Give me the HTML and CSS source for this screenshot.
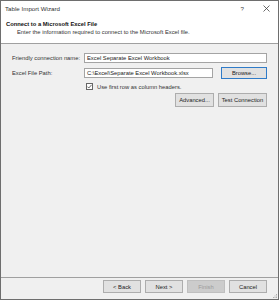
FILE: index.html
```html
<!DOCTYPE html>
<html>
<head>
<meta charset="utf-8">
<link rel="stylesheet" href="styles.css">
</head>
<body>
<div class="window">
  <div class="titlebar">
    <span class="title">Table Import Wizard</span>
    <span class="help">?</span>
    <svg class="close" width="7" height="7" viewBox="0 0 7 7"><path d="M0.5 0.5 L6.5 6.5 M6.5 0.5 L0.5 6.5" stroke="#444" stroke-width="0.8" fill="none"/></svg>
  </div>
  <div class="header">
    <div class="heading">Connect to a Microsoft Excel File</div>
    <div class="subtitle">Enter the information required to connect to the Microsoft Excel file.</div>
  </div>
  <div class="content">
    <div class="row row-name">
      <span class="label">Friendly connection name:</span>
      <div class="input input-full">Excel Separate Excel Workbook</div>
    </div>
    <div class="row row-path">
      <span class="label">Excel File Path:</span>
      <div class="input input-path">C:\Excel\Separate Excel Workbook.xlsx</div>
      <div class="btn btn-browse">Browse...</div>
    </div>
    <div class="row row-check">
      <span class="checkbox"><svg width="5" height="5" viewBox="0 0 5 5"><path d="M0.4 2.6 L1.8 4 L4.6 0.8" stroke="#444" stroke-width="0.8" fill="none"/></svg></span>
      <span class="check-label">Use first row as column headers.</span>
    </div>
    <div class="row row-actions">
      <div class="btn btn-adv">Advanced...</div>
      <div class="btn btn-test">Test Connection</div>
    </div>
  </div>
  <div class="footer">
    <div class="btn btn-nav">&lt; Back</div>
    <div class="btn btn-nav">Next &gt;</div>
    <div class="btn btn-nav btn-disabled">Finish</div>
    <div class="btn btn-nav">Cancel</div>
  </div>
  <svg class="grip" width="4" height="4" viewBox="0 0 4 4"><rect x="3" y="0" width="1" height="1" fill="#b0b0b0"/><rect x="1.5" y="1.5" width="1" height="1" fill="#b0b0b0"/><rect x="3" y="1.5" width="1" height="1" fill="#b0b0b0"/><rect x="0" y="3" width="1" height="1" fill="#b0b0b0"/><rect x="1.5" y="3" width="1" height="1" fill="#b0b0b0"/><rect x="3" y="3" width="1" height="1" fill="#b0b0b0"/></svg>
</div>
</body>
</html>
```
FILE: styles.css
```css
html, body {
  margin: 0;
  padding: 0;
  background: #f0f0f0;
}
.window {
  position: relative;
  width: 279px;
  height: 300px;
  box-sizing: border-box;
  border: 1px solid #6e6e6e;
  display: flex;
  flex-direction: column;
  font-family: "Liberation Sans", Arial, sans-serif;
  font-size: 5.8px;
  color: #2a2a2a;
  background: #f0f0f0;
}
.titlebar {
  height: 15px;
  background: #fff;
  display: flex;
  align-items: center;
  padding-left: 4px;
  padding-right: 8px;
}
.title {
  font-size: 6.2px;
  color: #333;
}
.help {
  margin-left: auto;
  font-size: 6.2px;
  color: #444;
}
.close {
  margin-left: 19px;
  display: block;
}
.header {
  height: 28px;
  box-sizing: border-box;
  background: #fff;
  border-bottom: 1px solid #a0a0a0;
  padding: 4px 0 0 5px;
}
.heading {
  font-weight: bold;
  line-height: 8px;
  color: #111;
}
.subtitle {
  line-height: 8px;
  margin-left: 11px;
  color: #333;
}
.content {
  flex: 1;
  padding: 9px 11px 0 11px;
}
.row {
  display: flex;
  align-items: center;
}
.label {
  width: 72px;
  flex: none;
  color: #333;
}
.row-name {
  height: 10px;
}
.input {
  height: 10px;
  box-sizing: border-box;
  border: 1px solid #a4a4a4;
  background: #fff;
  padding-left: 2px;
  line-height: 8px;
  white-space: nowrap;
  overflow: hidden;
  color: #222;
}
.input-full {
  flex: 1;
}
.row-path {
  margin-top: 4px;
  height: 12px;
}
.input-path {
  width: 129px;
}
.btn {
  box-sizing: border-box;
  background: #e1e1e1;
  border: 1px solid #adadad;
  display: flex;
  align-items: center;
  justify-content: center;
  color: #222;
  white-space: nowrap;
}
.btn-browse {
  margin-left: auto;
  width: 46px;
  height: 12px;
  border-color: #2f7bc8;
}
.row-check {
  margin-top: 4px;
  height: 7px;
  padding-left: 74px;
}
.checkbox {
  width: 7px;
  height: 7px;
  box-sizing: border-box;
  border: 1px solid #666;
  background: #fff;
  display: flex;
  align-items: center;
  justify-content: center;
}
.checkbox svg {
  display: block;
}
.check-label {
  margin-left: 4px;
  color: #333;
}
.row-actions {
  margin-top: 3px;
  justify-content: flex-end;
  gap: 4px;
}
.btn-adv {
  width: 39px;
  height: 14px;
}
.btn-test {
  width: 49px;
  height: 14px;
}
.footer {
  height: 22px;
  box-sizing: border-box;
  border-top: 1px solid #a0a0a0;
  padding: 2px 11px 0 0;
  display: flex;
  align-items: flex-start;
  justify-content: flex-end;
  gap: 4px;
}
.btn-nav {
  width: 38px;
  height: 13px;
}
.btn-disabled {
  background: #cccccc;
  border-color: #bfbfbf;
  color: #9a9a9a;
}
.grip {
  position: absolute;
  right: 1px;
  bottom: 1px;
}
```
